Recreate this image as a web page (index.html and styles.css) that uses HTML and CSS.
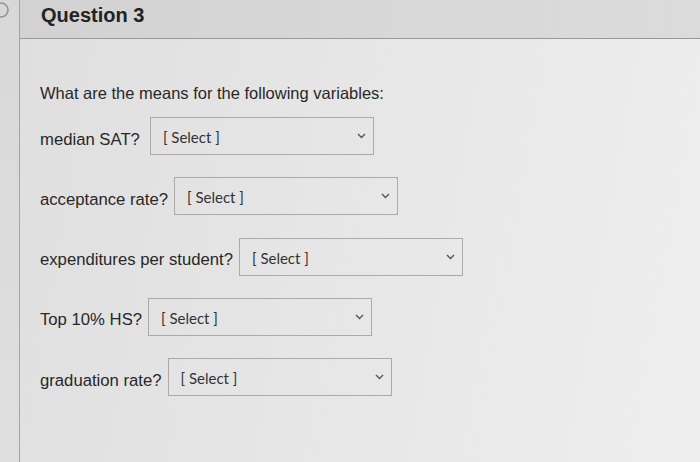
FILE: index.html
```html
<!DOCTYPE html>
<html>
<head>
<meta charset="utf-8">
<link rel="stylesheet" href="styles.css">
</head>
<body>
<div class="page">
  <aside class="rail">
    <svg class="rail-icon" width="19" height="24" viewBox="0 0 19 24"><circle cx="1" cy="10" r="7" fill="none" stroke="#959595" stroke-width="1.6"/></svg>
  </aside>
  <main class="main">
    <header class="head"><h1 class="title">Question 3</h1></header>
    <section class="body">
      <p class="prompt">What are the means for the following variables:</p>
      <div class="rows">
        <div class="row row-wide"><span class="label">median SAT?</span><div class="select"><span class="select-text">[ Select ]</span><svg class="chev" width="9" height="6" viewBox="0 0 9 6"><path d="M1 1 L4.5 4.5 L8 1" fill="none" stroke="#555" stroke-width="1.4"/></svg></div></div>
        <div class="row"><span class="label">acceptance rate?</span><div class="select"><span class="select-text">[ Select ]</span><svg class="chev" width="9" height="6" viewBox="0 0 9 6"><path d="M1 1 L4.5 4.5 L8 1" fill="none" stroke="#555" stroke-width="1.4"/></svg></div></div>
        <div class="row"><span class="label">expenditures per student?</span><div class="select"><span class="select-text">[ Select ]</span><svg class="chev" width="9" height="6" viewBox="0 0 9 6"><path d="M1 1 L4.5 4.5 L8 1" fill="none" stroke="#555" stroke-width="1.4"/></svg></div></div>
        <div class="row"><span class="label">Top 10% HS?</span><div class="select"><span class="select-text">[ Select ]</span><svg class="chev" width="9" height="6" viewBox="0 0 9 6"><path d="M1 1 L4.5 4.5 L8 1" fill="none" stroke="#555" stroke-width="1.4"/></svg></div></div>
        <div class="row"><span class="label">graduation rate?</span><div class="select"><span class="select-text">[ Select ]</span><svg class="chev" width="9" height="6" viewBox="0 0 9 6"><path d="M1 1 L4.5 4.5 L8 1" fill="none" stroke="#555" stroke-width="1.4"/></svg></div></div>
      </div>
    </section>
  </main>
</div>
</body>
</html>
```
FILE: styles.css
```css
html, body {
  margin: 0;
  padding: 0;
  width: 700px;
  height: 462px;
  overflow: hidden;
  font-family: "Liberation Sans", Arial, sans-serif;
  color: #2a2a2a;
}
.page {
  display: flex;
  width: 700px;
  height: 462px;
}
.rail {
  width: 19px;
  flex: none;
  background: linear-gradient(to bottom, #d8d8d8, #dfdfdf);
  border-right: 1px solid #a5a5a5;
}
.rail-icon {
  display: block;
}
.main {
  flex: 1;
  display: flex;
  flex-direction: column;
  background: linear-gradient(100deg, #dfdfdf 0%, #e6e6e6 45%, #eeeeee 100%);
}
.head {
  height: 39px;
  flex: none;
  box-sizing: border-box;
  border-bottom: 1px solid #999;
  background: linear-gradient(to right, #d2d2d2, #d8d8d8 60%, #dbdbdb);
  padding: 4px 0 0 21px;
}
.title {
  margin: 0;
  font-size: 20px;
  line-height: 23px;
  font-weight: bold;
  color: #222;
}
.body {
  padding: 45px 0 0 20px;
}
.prompt {
  margin: 0;
  font-size: 16.5px;
  line-height: 19px;
  color: #282828;
}
.rows {
  margin-top: 14px;
  display: flex;
  flex-direction: column;
  gap: 22.25px;
}
.row {
  display: flex;
  align-items: center;
  gap: 6px;
  height: 38px;
}
.row-wide {
  gap: 10px;
}
.label {
  font-size: 16.7px;
  line-height: 19px;
  padding-top: 6px;
  color: #282828;
}
.select {
  box-sizing: border-box;
  width: 224px;
  height: 38px;
  border: 1px solid #aaa;
  display: flex;
  align-items: center;
  justify-content: space-between;
  padding: 0 7px 0 12px;
}
.select-text {
  font-family: Lato, "Liberation Sans", sans-serif;
  font-size: 15px;
  line-height: 18px;
  padding-top: 2px;
  color: #333;
}
.chev {
  display: block;
}
```
